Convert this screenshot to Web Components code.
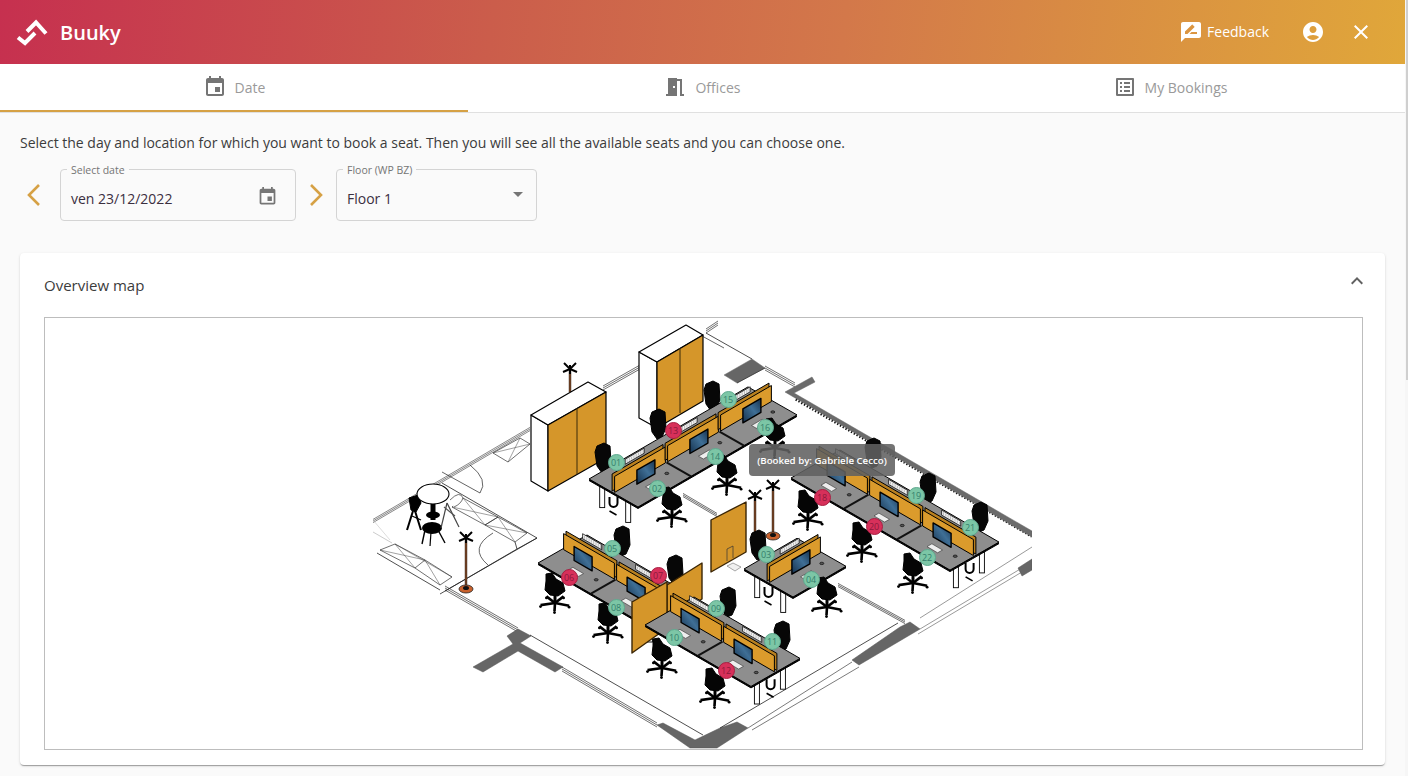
<!DOCTYPE html>
<html lang="en">
<head>
<meta charset="utf-8">
<title>Buuky</title>
<style>
  html, body { margin: 0; height: 100%; overflow: hidden; background: #fafafa; }
  body { font-family: "Open Sans", "Liberation Sans", sans-serif; color: #3c3c3c; }
</style>
</head>
<body>
<app-shell>
  <app-header></app-header>
  <tab-bar>
    <tab-item icon="event" active>Date</tab-item>
    <tab-item icon="room">Offices</tab-item>
    <tab-item icon="list">My Bookings</tab-item>
  </tab-bar>
  <page-content>
    <span slot="intro">Select the day and location for which you want to book a seat. Then you will see all the available seats and you can choose one.</span>
    <nav-arrow slot="filters" dir="left"></nav-arrow>
    <form-field slot="filters" label="Select date" value="ven 23/12/2022" icon="event" style="width:236px"></form-field>
    <nav-arrow slot="filters" dir="right"></nav-arrow>
    <form-field slot="filters" label="Floor (WP BZ)" value="Floor 1" icon="drop" style="width:201px"></form-field>
    <overview-card slot="card" heading="Overview map">
      <seat-map>
        <seat-pin x="616" y="462">01</seat-pin>
        <seat-pin x="657" y="488">02</seat-pin>
        <seat-pin x="766" y="554">03</seat-pin>
        <seat-pin x="811" y="579">04</seat-pin>
        <seat-pin x="612" y="548">05</seat-pin>
        <seat-pin x="569" y="577" booked>06</seat-pin>
        <seat-pin x="658" y="575" booked>07</seat-pin>
        <seat-pin x="616" y="607">08</seat-pin>
        <seat-pin x="716" y="608">09</seat-pin>
        <seat-pin x="674" y="637">10</seat-pin>
        <seat-pin x="772" y="641">11</seat-pin>
        <seat-pin x="726" y="670" booked>12</seat-pin>
        <seat-pin x="673" y="430" booked>13</seat-pin>
        <seat-pin x="715" y="456">14</seat-pin>
        <seat-pin x="728" y="399">15</seat-pin>
        <seat-pin x="765" y="427">16</seat-pin>
        <seat-pin x="822" y="497" booked>18</seat-pin>
        <seat-pin x="916" y="495">19</seat-pin>
        <seat-pin x="874" y="526" booked>20</seat-pin>
        <seat-pin x="970" y="527">21</seat-pin>
        <seat-pin x="927" y="557">22</seat-pin>
        <map-tooltip x="749" y="444">(Booked by: Gabriele Cecco)</map-tooltip>
      </seat-map>
    </overview-card>
  </page-content>
</app-shell>

<script>
const ICONS = {
  event: 'M17 12h-5v5h5v-5zM16 1v2H8V1H6v2H5c-1.11 0-1.99.9-1.99 2L3 19c0 1.1.89 2 2 2h14c1.1 0 2-.9 2-2V5c0-1.1-.9-2-2-2h-1V1h-2zm3 18H5V8h14v11z',
  room: 'M14 6v15H3v-2h2V3h9v1h5v15h2v2h-4V6h-3zm-4 5v2h2v-2h-2z',
  list: 'M19 5v14H5V5h14m1.1-2H3.9c-.5 0-.9.4-.9.9v16.2c0 .4.4.9.9.9h16.2c.4 0 .9-.5.9-.9V3.9c0-.5-.5-.9-.9-.9zM11 7h6v2h-6V7zm0 4h6v2h-6v-2zm0 4h6v2h-6zM7 7h2v2H7zm0 4h2v2H7zm0 4h2v2H7z',
  feedback: 'M20 2H4c-1.1 0-1.99.9-1.99 2L2 22l4-4h14c1.1 0 2-.9 2-2V4c0-1.1-.9-2-2-2zM6 14v-2.47l6.88-6.88c.2-.2.51-.2.71 0l1.77 1.77c.2.2.2.51 0 .71L8.47 14H6zm12 0h-7.5l2-2H18v2z',
  account: 'M12 2C6.48 2 2 6.48 2 12s4.48 10 10 10 10-4.48 10-10S17.52 2 12 2zm0 4c1.93 0 3.5 1.57 3.5 3.5S13.93 13 12 13s-3.5-1.57-3.5-3.5S10.07 6 12 6zm0 14c-2.03 0-4.43-.82-6.14-2.88C7.55 15.8 9.68 15 12 15s4.45.8 6.14 2.12C16.43 19.18 14.03 20 12 20z',
  close: 'M19 6.41L17.59 5 12 10.59 6.41 5 5 6.41 10.59 12 5 17.59 6.41 19 12 13.41 17.59 19 19 17.59 13.41 12z',
  drop: 'M7 10l5 5 5-5z',
  up: 'M12 8l-6 6 1.41 1.41L12 10.83l4.59 4.58L18 14z'
};
const svgIcon = (name, size, color) =>
  `<svg width="${size}" height="${size}" viewBox="0 0 24 24" fill="${color}" style="display:block;flex:none"><path d="${ICONS[name]}"/></svg>`;

class AppShell extends HTMLElement {
  constructor() {
    super();
    this.attachShadow({ mode: 'open' }).innerHTML = `
    <style>
      :host { display: grid; grid-template-columns: 1405px 3px; height: 776px; overflow: hidden; }
      main { display: flex; flex-direction: column; min-width: 0; }
      .scrollbar { background: #f6f6f6; display: flex; }
      .thumb { width: 2px; margin-left: 1px; height: 380px; background: #cfcfcf; }
    </style>
    <main><slot></slot></main>
    <div class="scrollbar"><div class="thumb"></div></div>`;
  }
}

class AppHeader extends HTMLElement {
  constructor() {
    super();
    this.attachShadow({ mode: 'open' }).innerHTML = `
    <style>
      :host {
        display: flex; align-items: center; height: 64px; flex: none; padding: 0 32px 0 16px;
        box-sizing: border-box; color: #fff;
        background: linear-gradient(97deg, #c6304f 0%, #cb5d4b 35%, #d3784a 60%, #e0a73a 100%);
      }
      .logo { display: block; margin-right: 12px; }
      .brand { font-size: 20px; font-weight: 600; flex: 1; }
      .feedback { display: flex; align-items: center; gap: 4px; font-size: 14px; font-weight: 500; margin-right: 32px; }
      .feedback span { position: relative; top: -1px; }
      .account { margin-right: 24px; }
    </style>
    <svg class="logo" width="32" height="32" viewBox="0 0 32 32" fill="none" stroke="#fff" stroke-width="4">
      <path d="M2 21.5 L9 27 L19 17"/><path d="M11 15.5 L20 6.5 L30 17.5"/>
    </svg>
    <div class="brand">Buuky</div>
    <div class="feedback">${svgIcon('feedback', 24, '#fff')}<span>Feedback</span></div>
    <div class="account">${svgIcon('account', 24, '#fff')}</div>
    ${svgIcon('close', 24, '#fff')}`;
  }
}

class TabBar extends HTMLElement {
  constructor() {
    super();
    this.attachShadow({ mode: 'open' }).innerHTML = `
    <style>
      :host {
        display: grid; grid-template-columns: repeat(3, 468px); height: 49px; flex: none;
        background: #fff; border-bottom: 1px solid #e0e0e0; box-sizing: border-box;
      }
    </style>
    <slot></slot>`;
  }
}

class TabItem extends HTMLElement {
  constructor() {
    super();
    this.attachShadow({ mode: 'open' });
  }
  connectedCallback() {
    this.shadowRoot.innerHTML = `
    <style>
      :host {
        display: flex; align-items: center; justify-content: center; gap: 8px;
        font-size: 14px; color: #9a9a9a; box-sizing: border-box; height: 48px;
        border-bottom: 2px solid transparent;
      }
      :host([active]) { border-bottom-color: #d6a145; }
    </style>
    ${svgIcon(this.getAttribute('icon'), 24, '#757575')}<slot></slot>`;
  }
}

class PageContent extends HTMLElement {
  constructor() {
    super();
    this.attachShadow({ mode: 'open' }).innerHTML = `
    <style>
      :host { display: flex; flex-direction: column; padding: 20px 20px 0; flex: 1; min-height: 0; font-size: 14px; color: #3c3c3c; }
      .intro { line-height: 20px; height: 20px; white-space: nowrap; }
      .filters { display: flex; align-items: center; margin-top: 16px; height: 52px; }
      .card { margin-top: 32px; }
    </style>
    <div class="intro"><slot name="intro"></slot></div>
    <div class="filters"><slot name="filters"></slot></div>
    <div class="card"><slot name="card"></slot></div>`;
  }
}

class NavArrow extends HTMLElement {
  constructor() {
    super();
    this.attachShadow({ mode: 'open' });
  }
  connectedCallback() {
    const left = this.getAttribute('dir') === 'left';
    this.shadowRoot.innerHTML = `
    <style>
      :host { display: flex; align-items: center; justify-content: ${left ? 'flex-start' : 'center'}; width: 40px; height: 52px; flex: none; box-sizing: border-box; padding-left: ${left ? 6 : 0}px; }
    </style>
    <svg width="16" height="24" viewBox="0 0 16 24" fill="none" stroke="#d6a145" stroke-width="2.6">
      <path d="${left ? 'M13 2 L3 12 L13 22' : 'M3 2 L13 12 L3 22'}"/>
    </svg>`;
  }
}

class FormField extends HTMLElement {
  constructor() {
    super();
    this.attachShadow({ mode: 'open' });
  }
  connectedCallback() {
    const icon = this.getAttribute('icon');
    const isDrop = icon === 'drop';
    this.shadowRoot.innerHTML = `
    <style>
      :host {
        display: flex; align-items: center; position: relative; height: 52px; box-sizing: border-box; flex: none;
        border: 1px solid #d4d4d4; border-radius: 4px; padding: 0 ${isDrop ? '6' : '17'}px 0 10px;
        background: #fafafa;
      }
      label {
        position: absolute; left: 6px; top: -6px; padding: 0 4px; background: #fafafa;
        font-size: 10.5px; line-height: 13px; color: #757575; white-space: nowrap;
      }
      .value { flex: 1; font-size: 14px; color: #3a2f3f; padding-top: 7px; }
      .icon { margin-top: ${isDrop ? -2 : 2}px; }
    </style>
    <label>${this.getAttribute('label')}</label>
    <div class="value">${this.getAttribute('value')}</div>
    <div class="icon">${svgIcon(icon, isDrop ? 24 : 21, '#757575')}</div>`;
  }
}

class OverviewCard extends HTMLElement {
  constructor() {
    super();
    this.attachShadow({ mode: 'open' });
  }
  connectedCallback() {
    this.shadowRoot.innerHTML = `
    <style>
      :host {
        display: block; background: #fff; border-radius: 4px; height: 512px; box-sizing: border-box;
        padding: 0 22px 15px 24px;
        box-shadow: 0 2px 1px -1px rgba(0,0,0,.2), 0 1px 1px 0 rgba(0,0,0,.14), 0 1px 3px 0 rgba(0,0,0,.12);
      }
      .head { display: flex; justify-content: space-between; height: 64px; }
      h2 { margin: 22px 0 0; font-size: 15px; line-height: 20px; font-weight: 400; color: #3c3c3c; }
      .toggle { margin: 16px -6px 0 0; }
    </style>
    <div class="head"><h2>${this.getAttribute('heading')}</h2><div class="toggle">${svgIcon('up', 24, '#616161')}</div></div>
    <slot></slot>`;
  }
}

// drawing helpers, all in page pixels so the plan can be read against the screenshot
const pts = a => a.map(p => p[0].toFixed(1) + ',' + p[1].toFixed(1)).join(' ');
const poly = (a, fill, stroke = '#000', w = 1) =>
  `<polygon points="${pts(a)}" fill="${fill}" stroke="${stroke}" stroke-width="${w}" stroke-linejoin="round"/>`;
const line = (a, w = .8, c = '#222') =>
  `<polyline points="${pts(a)}" fill="none" stroke="${c}" stroke-width="${w}"/>`;
const mv = (p, v, k = 1) => [p[0] + v[0] * k, p[1] + v[1] * k];
const up = (p, h) => [p[0], p[1] - h];

function triple(a, b, gap = 2, c = '#333') {
  let s = '';
  for (const k of [-1, 0, 1]) s += line([[a[0], a[1] + k * gap], [b[0], b[1] + k * gap]], .7, c);
  return s;
}

// a four-cornered window block with crossed diagonals
function xBox(a, b, c, d) {
  return poly([a, b, c, d], 'none', '#333', .7) + line([a, c], .5, '#444') + line([b, d], .5, '#444');
}

function frontChair(x, y) {
  let s = '';
  for (const deg of [20, 92, 165, 235, 305]) {
    const t = deg * Math.PI / 180;
    const ex = x + Math.cos(t) * 15, ey = y + Math.sin(t) * 8;
    s += line([[x, y], [ex, ey]], 2.6, '#000');
    s += `<circle cx="${ex.toFixed(1)}" cy="${(ey + 1.5).toFixed(1)}" r="1.4" fill="#000"/>`;
  }
  s += line([[x, y], [x, y - 9]], 3, '#000');
  s += poly([[x - 9, y - 29], [x - 3, y - 30], [x + 1, y - 24], [x + 8, y - 20], [x + 10, y - 12], [x + 3, y - 7], [x - 5, y - 8], [x - 10, y - 13], [x - 9, y - 22]], '#050505', '#000', 1);
  return s;
}
function backChair(x, y) {
  return poly([[x - 8, y - 6], [x - 6, y - 12], [x + 1, y - 15], [x + 7, y - 12], [x + 8, y + 4], [x + 4, y + 13], [x - 1, y + 15], [x - 6, y + 8]], '#070707', '#000', 1);
}

function bench(O, L, D, n) {
  const upright = L[1] < 0;            // long side runs up and to the right
  const end = upright ? O : mv(O, L, n);
  const frontK = upright ? 1 : -1;
  const C = mv(O, D, .5);
  let s = '';
  // legs below the nearest end
  const legs = upright ? [.27, .8] : [.12, .65];
  for (const k of legs) {
    const p = mv(end, D, k);
    s += `<rect x="${(p[0] - 2.5).toFixed(1)}" y="${p[1].toFixed(1)}" width="5" height="21" fill="#fff" stroke="#000" stroke-width=".9"/>`;
  }
  const mid = mv(end, D, upright ? .5 : .4);
  s += `<path d="M${mid[0] - 4} ${mid[1] + 4} v6 a4 4 0 0 0 8 0 v-6" fill="none" stroke="#000" stroke-width="2"/>`;
  s += line([[mid[0] - 4, mid[1] + 18], [mid[0] + 3, mid[1] + 22]], 1.6, '#000');
  // table top
  const top = [O, mv(O, L, n), mv(mv(O, L, n), D), mv(O, D)];
  s += poly(top.map(p => [p[0], p[1] + 1.5]), '#000');
  s += poly(top, '#8e8e8e', '#000', 1);
  // back-row strips stick out just above the panels
  for (let i = 0; i < n; i++) {
    const a = up(mv(C, L, i + (upright ? .22 : .38)), 22), b = mv(a, L, .36);
    s += poly([a, b, up(b, 5), up(a, 5)], '#f2f2f2', '#111', .8);
    for (let t = .1; t < 1; t += .12) {
      const q = mv(a, L, .36 * t);
      s += line([up(q, 1), up(q, 4)], .5, '#888');
    }
  }
  for (let i = 1; i < n; i++) {
    const p = mv(C, L, i);
    s += line([p, mv(p, D, frontK * .5)], 2, '#111');
  }
  for (let i = 0; i <= n - 1; i++) {
    // panels: a rear leaf and a front leaf
    const a = mv(C, L, i + .02), b = mv(C, L, i + .98);
    const H = 17;
    const ar = mv(a, D, -frontK * .05), br = mv(b, D, -frontK * .05);
    s += poly([ar, br, up(br, H), up(ar, H)], '#b9801f', '#000', 1);
    s += poly([a, b, up(b, H - 1), up(a, H - 1)], '#db9b2c', '#000', 1);
    // monitor and stand
    const c = mv(mv(C, L, i + .5), D, frontK * .12);
    const sb = mv(c, D, frontK * .1);
    s += poly([mv(sb, L, -.1), mv(sb, L, .1), mv(mv(sb, L, .1), D, frontK * .1), mv(mv(sb, L, -.1), D, frontK * .1)], '#eee', '#333', .6);
    const m = up(c, 9), hw = .17;
    const sc = [up(mv(m, L, -hw), 7), up(mv(m, L, hw), 7), up(mv(m, L, hw), -7), up(mv(m, L, -hw), -7)];
    s += poly(sc, 'url(#screen)', '#000', 1.4);
    // grommets
    const g1 = mv(mv(C, L, i + .82), D, frontK * .2);
    s += `<ellipse cx="${g1[0].toFixed(1)}" cy="${g1[1].toFixed(1)}" rx="2" ry="1.2" fill="#555" stroke="#000" stroke-width=".6"/>`;
  }
  return s;
}

function coatTree(x, top, bottom, base) {
  let s = line([[x, top + 3], [x, bottom]], 2.4, '#2a1608') + line([[x, top + 3], [x, bottom]], 1, '#a4623a');
  for (const d of [[-6, -6], [6, -6], [-7, 3], [7, 3], [0, -4], [0, 5]]) s += line([[x, top + 1], [x + d[0], top + 1 + d[1]]], 2, '#000');
  if (base) {
    s += `<ellipse cx="${x}" cy="${bottom + 1}" rx="7" ry="4" fill="#c9622d" stroke="#222" stroke-width=".8"/>`;
    s += `<ellipse cx="${x}" cy="${bottom}" rx="3" ry="2" fill="#111"/>`;
  }
  return s;
}

function cabinet(a, b, c, d, midTop, midBot, h) {
  // a-b front top edge left side, b-c top rear; h is the height of the unit
  return poly([a, mv(a, [0, h]), mv(b, [0, h]), b], '#fff', '#000', 1.2) +
    poly([a, d, c, b], '#fff', '#000', 1.2) +
    poly([b, c, mv(c, [0, h]), mv(b, [0, h])], '#d5962a', '#000', 1.2) +
    line([midTop, midBot], 1, '#3a2a08');
}

function floorPlan() {
  let s = '';
  const grey = '#666';
  // top walls
  s += triple([603, 388], [640, 367]);
  s += triple([706, 331], [718, 323]);
  s += triple([765, 368], [795, 385]);
  s += line([[706, 333], [752, 359]], .8) + line([[702, 336], [724, 348]], .7);
  s += poly([[724, 375], [752, 359], [765, 368], [737, 383]], grey, '#777', .5);
  s += line([[737, 383], [765, 368]], .7);
  // hatched right wall
  s += line([[796, 399], [1032, 536]], 3.5, '#111').replace('/>', ' stroke-dasharray="1.4 1.8"/>');
  s += poly([[785, 392], [812, 377], [815, 382], [794, 393], [1032, 531], [1032, 537]], '#6b6b6b', '#666', .5);
  // left wall with door and window
  s += triple([373, 521], [530, 429], 1.6, '#555');
  s += `<path d="M470 465 Q 489 480 480 493 L 442 472" fill="none" stroke="#222" stroke-width=".7"/>`;
  s += xBox([493, 453], [520, 438], [530, 444], [508, 462]);
  // window blocks by the round table
  s += xBox([463, 498], [498, 517], [485, 525], [452, 507]);
  s += xBox([498, 517], [527, 533], [515, 542], [485, 525]);
  s += line([[442, 483], [537, 538], [517, 549], [515, 542]], .8) + line([[537, 538], [445, 591]], .8) + line([[517, 549], [440, 594]], .8);
  s += `<path d="M488 565 Q 468 548 493 533" fill="none" stroke="#222" stroke-width=".7"/>`;
  s += xBox([380, 550], [395, 544], [425, 560], [415, 568]);
  s += xBox([395, 544], [425, 560], [452, 577], [440, 585]).replace(/<polygon[^>]*>/, '');
  s += line([[425, 560], [452, 577], [440, 585], [415, 568]], .7, '#333');
  s += line([[377, 553], [440, 590]], .8);
  s += line([[373, 532], [392, 543]], .6, '#aaa') + line([[373, 520], [390, 540]], .5, '#bbb');
  // bottom left walls
  s += triple([445, 588], [518, 630], 2);
  s += poly([[507, 636], [518, 629], [531, 636], [520, 643], [563, 667], [555, 672], [518, 651], [483, 672], [473, 667], [513, 644]], grey, '#555', .5);
  s += line([[530, 635], [703, 735]], .8);
  s += triple([562, 669], [657, 725], 2);
  s += poly([[657, 725], [663, 723], [695, 740], [720, 728], [737, 722], [748, 728], [717, 748], [690, 748]], grey, '#555', .5);
  // bottom right walls
  s += line([[720, 728], [898, 623]], .8);
  s += line([[748, 728], [852, 662]], .6) + line([[752, 730], [859, 667]], .6);
  s += poly([[852, 660], [900, 627], [910, 622], [920, 629], [859, 665]], grey, '#555', .5);
  s += line([[920, 618], [1032, 547]], .6, '#555');
  s += line([[920, 629], [1032, 562]], .6, '#555') + line([[918, 634], [1032, 566]], .6, '#555');
  s += poly([[1018, 568], [1032, 559], [1032, 570], [1022, 576]], grey, '#555', .5);
  // inner walls
  s += triple([683, 495], [717, 515], 1.6);
  s += triple([838, 585], [905, 622], 1.6);
  return s;
}

function tableSet() {
  return line([[433, 500], [433, 520]], 5, '#000') +
    `<ellipse cx="432" cy="528" rx="10" ry="6" fill="#000"/>` +
    `<ellipse cx="433" cy="515" rx="7" ry="3.5" fill="#000"/>` +
    line([[425, 530], [422, 544]], 1.4, '#000') + line([[438, 530], [445, 543]], 1.4, '#000') + line([[431, 532], [430, 546]], 1.2, '#000') +
    poly([[409, 498], [418, 495], [421, 503], [416, 512], [411, 510]], '#000') +
    line([[413, 511], [407, 530]], 2, '#000') + line([[415, 511], [421, 530]], 2, '#000') + line([[412, 516], [421, 520]], 1.2, '#000') +
    line([[447, 503], [441, 528]], 1.2, '#444') + line([[447, 503], [459, 527]], 1.2, '#444') + line([[444, 507], [455, 516]], 1.2, '#555') +
    `<path d="M450 500 q10 -10 13 -2 q-2 6 -9 9" fill="#fff" stroke="#333" stroke-width=".7"/>` +
    `<ellipse cx="433" cy="494" rx="16" ry="10" fill="#fff" stroke="#000" stroke-width="1.1"/>`;
}

class SeatMap extends HTMLElement {
  constructor() {
    super();
    const up30 = [53, -30.7], down30 = [53, 30.7];
    const dDown = [49, 28], dUp = [49, -28];
    const orange = '#d5962a', edge = '#3a2505';
    const art = [
      floorPlan(),
      coatTree(570, 368, 392),
      cabinet([531, 415], [548, 425], [606, 392], [588, 382], [577, 408], [577, 474], 66),
      cabinet([639, 352], [657, 362], [703, 335], [686, 325], [680, 348], [680, 413], 66),
      tableSet(),
      coatTree(466, 537, 588, true),
      coatTree(755, 495, 545),
      coatTree(773, 485, 535, true),
      // back chairs go behind their bench
      [[603, 458], [658, 424], [712, 396]].map(p => backChair(...p)).join(''),
      [[873, 453], [928, 488], [980, 517]].map(p => backChair(...p)).join(''),
      backChair(758, 545),
      backChair(622, 541),
      backChair(675, 570),
      backChair(728, 602),
      backChair(782, 636),
      bench([589, 479], up30, dDown, 3),
      bench([791, 478], down30, dUp, 3),
      poly([[711, 520], [746, 502], [746, 552], [711, 572]], orange, edge, 1.4) +
        line([[727, 561], [727, 549], [733, 546], [733, 558]], .7, '#333') +
        poly([[727, 566], [733, 563], [741, 567], [735, 571]], '#f0f0f0', '#555', .5),
      bench([744, 569], up30, dDown, 1),
      bench([538, 563], down30, dUp, 2),
      poly([[667, 585], [702, 563], [702, 599], [667, 620]], orange, edge, 1.4),
      poly([[632, 602], [667, 582], [667, 628], [632, 653]], orange, edge, 1.4),
      bench([645, 625], down30, dUp, 2),
      [[672, 517], [727, 485], [775, 448], [808, 520], [862, 552], [913, 583], [827, 607], [555, 603], [608, 633], [662, 668], [715, 698]]
        .map(p => frontChair(...p)).join('')
    ].join('');
    this.attachShadow({ mode: 'open' }).innerHTML = `
    <style>
      :host { display: block; position: relative; height: 433px; box-sizing: border-box; border: 1px solid #bdbdbd; overflow: hidden; background: #fff; }
      svg { display: block; }
    </style>
    <svg width="1317" height="431" viewBox="45 318 1317 431">
      <defs>
        <linearGradient id="screen" x1="0" y1="1" x2="1" y2="0">
          <stop offset="0" stop-color="#14304c"/><stop offset=".55" stop-color="#3f6f96"/><stop offset="1" stop-color="#16324e"/>
        </linearGradient>
        <clipPath id="plan"><rect x="373" y="318" width="659" height="431"/></clipPath>
      </defs>
      <g clip-path="url(#plan)">${art}</g>
    </svg>
    <slot></slot>`;
  }
}

class SeatPin extends HTMLElement {
  constructor() {
    super();
    this.attachShadow({ mode: 'open' }).innerHTML = `
    <style>
      :host {
        position: absolute; width: 17px; height: 17px; margin: -8.5px 0 0 -8.5px; border-radius: 50%;
        display: flex; align-items: center; justify-content: center;
        box-sizing: border-box; background: #7cc6a6; border: 1px solid #5fa98f;
        font-size: 9px; color: #35806c; letter-spacing: -.2px;
      }
      :host([booked]) { background: #d7305a; border-color: #a81f42; color: #8c1a3c; }
    </style>
    <slot></slot>`;
  }
  connectedCallback() {
    this.style.left = (+this.getAttribute('x') - 45) + 'px';
    this.style.top = (+this.getAttribute('y') - 318) + 'px';
  }
}

class MapTooltip extends HTMLElement {
  constructor() {
    super();
    this.attachShadow({ mode: 'open' }).innerHTML = `
    <style>
      :host {
        position: absolute; height: 32px; width: 146px; box-sizing: border-box; display: flex; align-items: center; justify-content: center;
        background: rgba(97,97,97,.88); border-radius: 4px; color: #fff; font-size: 9.7px; font-weight: 600; white-space: nowrap;
      }
    </style>
    <slot></slot>`;
  }
  connectedCallback() {
    this.style.left = (+this.getAttribute('x') - 45) + 'px';
    this.style.top = (+this.getAttribute('y') - 318) + 'px';
  }
}

customElements.define('app-shell', AppShell);
customElements.define('app-header', AppHeader);
customElements.define('tab-bar', TabBar);
customElements.define('tab-item', TabItem);
customElements.define('page-content', PageContent);
customElements.define('nav-arrow', NavArrow);
customElements.define('form-field', FormField);
customElements.define('overview-card', OverviewCard);
customElements.define('seat-map', SeatMap);
customElements.define('seat-pin', SeatPin);
customElements.define('map-tooltip', MapTooltip);
</script>
</body>
</html>
